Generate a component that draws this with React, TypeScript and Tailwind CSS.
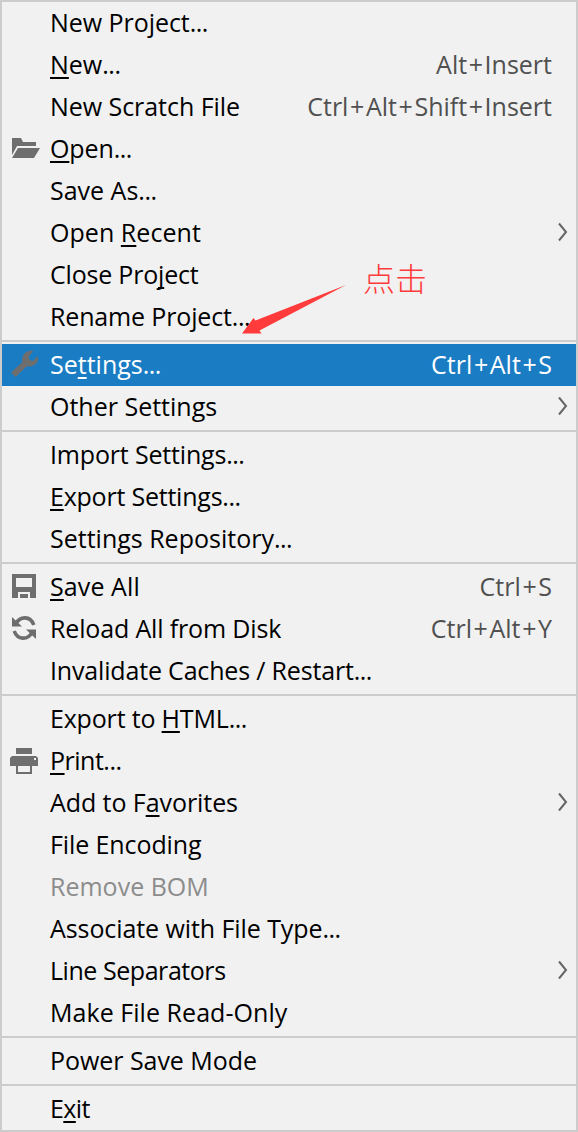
import { Fragment, type ReactNode } from 'react';

const FolderIcon = () => (
  <svg width="28" height="20" viewBox="0 0 28 20" className="mb-0.5 ml-1" fill="#6e6e6e">
    <path d="M0 0h9l2 4h13v4H5L0 17z" />
    <path d="M6 10h22l-6 10H0z" />
  </svg>
);

const WrenchIcon = () => (
  <svg width="28" height="28" viewBox="0 0 28 28" className="mb-0.5 ml-0.5" fill="#6e6e6e">
    <path d="M0 22.500L11.300 12.200C10 5.500 14.500.5 21.500.5L22 1.500L18 6V8.500L20 10.800H22.500L26 6.500L27 7C28 12.500 23 17.500 15.800 16.300L4.500 27z" />
  </svg>
);

const SaveIcon = () => (
  <svg width="24" height="24" viewBox="0 0 24 24" className="mb-0.5" fill="#6e6e6e">
    <path fillRule="evenodd" d="M0 0h24v24h-6v-6H6v6H0zM4 4v9h16V4z" />
    <path d="M8 20h8v4H8z" />
  </svg>
);

const ReloadIcon = () => (
  <svg width="24" height="24" viewBox="0 0 24 24" className="mb-0.5">
    <path d="M4 7.500C8 0 18.500-.5 21.800 9" fill="none" stroke="#6e6e6e" strokeWidth="3.600" />
    <path d="M0 1v9.500h10z" fill="#6e6e6e" />
    <path d="M20 16.500C16 24 5.500 24.500 2.200 15" fill="none" stroke="#6e6e6e" strokeWidth="3.600" />
    <path d="M24 23v-9.500H14z" fill="#6e6e6e" />
  </svg>
);

const PrintIcon = () => (
  <svg width="28" height="26" viewBox="0 0 28 26" fill="#6e6e6e">
    <path d="M6 0h16v6H6z" />
    <path fillRule="evenodd" d="M2 8h24l2 2v8h-6v8H6v-8H0v-8zM24 10v2h2v-2zM8 18v6h12v-6z" />
  </svg>
);

type Item = {
  label: ReactNode;
  dots?: boolean;
  tracking?: string;
  shortcut?: string;
  icon?: ReactNode;
  submenu?: boolean;
  selected?: boolean;
  disabled?: boolean;
};

// Underlined mnemonic letter
const U = ({ children }: { children: ReactNode }) => (
  <span className="underline decoration-2 underline-offset-[3px] [text-decoration-skip-ink:none]">{children}</span>
);

const groups: Item[][] = [
  [
    { label: 'New Project', dots: true, tracking: 'tracking-[-0.05px]' },
    { label: <><U>N</U>ew</>, dots: true, shortcut: 'Alt+Insert' },
    { label: 'New Scratch File', shortcut: 'Ctrl+Alt+Shift+Insert', tracking: 'tracking-[-0.05px]' },
    { label: <><U>O</U>pen</>, dots: true, icon: <FolderIcon />, tracking: 'tracking-[-0.1px]' },
    { label: 'Save As', dots: true },
    { label: <>Open <U>R</U>ecent</>, submenu: true, tracking: 'tracking-[0.05px]' },
    { label: <>Close Pro<U>j</U>ect</>, tracking: 'tracking-[-0.2px]' },
    { label: 'Rename Project', dots: true, tracking: 'tracking-[-0.15px]' },
  ],
  [
    { label: <>Se<U>t</U>tings</>, dots: true, shortcut: 'Ctrl+Alt+S', icon: <WrenchIcon />, selected: true },
    { label: 'Other Settings', submenu: true },
  ],
  [
    { label: 'Import Settings', dots: true, tracking: 'tracking-[-0.17px]' },
    { label: <><U>E</U>xport Settings</>, dots: true, tracking: 'tracking-[-0.22px]' },
    { label: 'Settings Repository', dots: true },
  ],
  [
    { label: <><U>S</U>ave All</>, shortcut: 'Ctrl+S', icon: <SaveIcon />, tracking: 'tracking-[0.1px]' },
    { label: 'Reload All from Disk', shortcut: 'Ctrl+Alt+Y', icon: <ReloadIcon />, tracking: 'tracking-[-0.15px]' },
    { label: 'Invalidate Caches / Restart', dots: true, tracking: 'tracking-[-0.17px]' },
  ],
  [
    { label: <>Export to <U>H</U>TML</>, dots: true, tracking: 'tracking-[-0.18px]' },
    { label: <><U>P</U>rint</>, dots: true, icon: <PrintIcon />, tracking: 'tracking-[-0.5px]' },
    { label: <>Add to F<U>a</U>vorites</>, submenu: true, tracking: 'tracking-[-0.07px]' },
    { label: 'File Encoding', tracking: 'tracking-[-0.1px]' },
    { label: 'Remove BOM', disabled: true },
    { label: 'Associate with File Type', dots: true, tracking: 'tracking-[-0.08px]' },
    { label: 'Line Separators', submenu: true, tracking: 'tracking-[-0.45px]' },
    { label: 'Make File Read-Only', tracking: 'tracking-[0.05px]' },
  ],
  [{ label: 'Power Save Mode', tracking: 'tracking-[-0.05px]' }],
  [{ label: <>E<U>x</U>it</>, tracking: 'tracking-[-0.6px]' }],
];

function Shortcut({ keys }: { keys: string }) {
  return (
    <span>
      {keys.split('+').map((key, i) => (
        <Fragment key={i}>
          {i > 0 && <span className="px-[1.6px]">+</span>}
          {key}
        </Fragment>
      ))}
    </span>
  );
}

function MenuItem({ label, dots, tracking = '', shortcut, icon, submenu, selected, disabled }: Item) {
  const color = selected ? 'bg-[#1a7dc4] text-white' : disabled ? 'text-[#8c8c8c]' : 'text-black';
  return (
    <li className={`flex h-[42px] items-center whitespace-pre ${color}`}>
      <span className="flex w-11 shrink-0 justify-center">{icon}</span>
      <span className={`flex-1 pb-0.5 pl-1 ${tracking}`}>
        {label}
        {dots && <span className="tracking-[-0.5px]">...</span>}
      </span>
      {shortcut && (
        <span className={`pr-6 pb-0.5 ${selected ? 'text-white' : 'text-[#505050]'}`}>
          <Shortcut keys={shortcut} />
        </span>
      )}
      {submenu && (
        <svg width="10" height="20" viewBox="0 0 10 20" className="mr-2 mb-0.5" fill="none" stroke="#666666" strokeWidth="2">
          <path d="M1 1.500l7 8.500-7 8.500" />
        </svg>
      )}
    </li>
  );
}

export default function App() {
  return (
    <div className="relative h-[1132px] w-[578px] overflow-hidden border-2 border-[#cccccc] bg-[#f1f1f1] font-['Open_Sans','Noto_Sans',sans-serif] text-[25px] leading-10">
      {groups.map((items, i) => (
        <ul key={i} className={i > 0 ? 'pt-0.5' : ''}>
          {i > 0 && <li className="mb-0.5 h-0.5 bg-[#cccccc]" />}
          {items.map((item, j) => (
            <MenuItem key={j} {...item} />
          ))}
        </ul>
      ))}

      {/* Click annotation */}
      <svg width="108" height="52" viewBox="0 0 108 52" className="absolute left-[238px] top-[282px]" fill="#ff3b3b">
        <path d="M106 1L15.500 36.500 13.500 34 2 49.500h19.500l-2-3z" />
      </svg>
      <span className="absolute left-[361px] top-[258px] font-['Liberation_Serif','Noto_Sans_CJK_SC',serif] text-[32px] font-light text-[#ff3b3b]">点击</span>
    </div>
  );
}
